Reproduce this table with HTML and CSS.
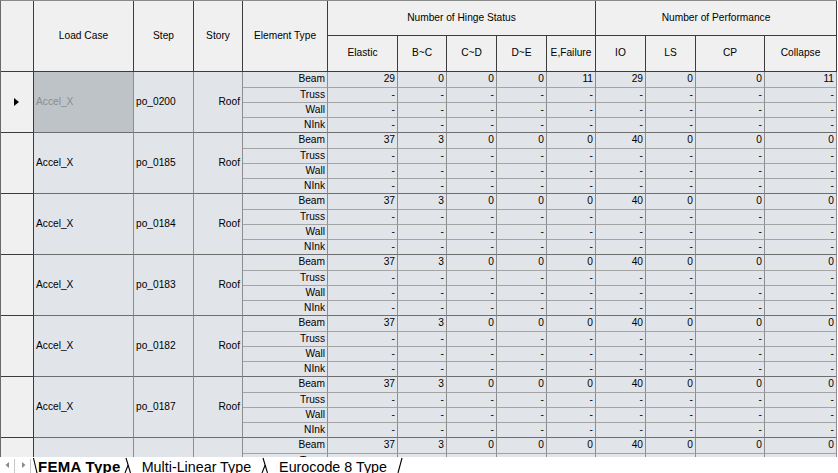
FILE: index.html
```html
<!DOCTYPE html>
<html>
<head>
<meta charset="utf-8">
<link rel="stylesheet" href="styles.css">
</head>
<body>
<div class="sheet">
  <div class="grid">
    <div class="c h hr"></div>
    <div class="c h hr">Load Case</div>
    <div class="c h hr">Step</div>
    <div class="c h hr">Story</div>
    <div class="c h hr">Element Type</div>
    <div class="c h g5">Number of Hinge Status</div>
    <div class="c h g4">Number of Performance</div>
    <div class="c h">Elastic</div>
    <div class="c h">B~C</div>
    <div class="c h">C~D</div>
    <div class="c h">D~E</div>
    <div class="c h">E,Failure</div>
    <div class="c h">IO</div>
    <div class="c h">LS</div>
    <div class="c h">CP</div>
    <div class="c h">Collapse</div>

    <!-- group 1 -->
    <div class="c rh"><span class="arrow"></span></div>
    <div class="c gp left sel">Accel_X</div>
    <div class="c gp left">po_0200</div>
    <div class="c gp">Roof</div>
    <div class="c">Beam</div><div class="c">29</div><div class="c">0</div><div class="c">0</div><div class="c">0</div><div class="c">11</div><div class="c">29</div><div class="c">0</div><div class="c">0</div><div class="c">11</div>
    <div class="c">Truss</div><div class="c">-</div><div class="c">-</div><div class="c">-</div><div class="c">-</div><div class="c">-</div><div class="c">-</div><div class="c">-</div><div class="c">-</div><div class="c">-</div>
    <div class="c">Wall</div><div class="c">-</div><div class="c">-</div><div class="c">-</div><div class="c">-</div><div class="c">-</div><div class="c">-</div><div class="c">-</div><div class="c">-</div><div class="c">-</div>
    <div class="c l">NInk</div><div class="c l">-</div><div class="c l">-</div><div class="c l">-</div><div class="c l">-</div><div class="c l">-</div><div class="c l">-</div><div class="c l">-</div><div class="c l">-</div><div class="c l">-</div>

    <!-- group 2 -->
    <div class="c rh"></div>
    <div class="c gp left">Accel_X</div>
    <div class="c gp left">po_0185</div>
    <div class="c gp">Roof</div>
    <div class="c">Beam</div><div class="c">37</div><div class="c">3</div><div class="c">0</div><div class="c">0</div><div class="c">0</div><div class="c">40</div><div class="c">0</div><div class="c">0</div><div class="c">0</div>
    <div class="c">Truss</div><div class="c">-</div><div class="c">-</div><div class="c">-</div><div class="c">-</div><div class="c">-</div><div class="c">-</div><div class="c">-</div><div class="c">-</div><div class="c">-</div>
    <div class="c">Wall</div><div class="c">-</div><div class="c">-</div><div class="c">-</div><div class="c">-</div><div class="c">-</div><div class="c">-</div><div class="c">-</div><div class="c">-</div><div class="c">-</div>
    <div class="c l">NInk</div><div class="c l">-</div><div class="c l">-</div><div class="c l">-</div><div class="c l">-</div><div class="c l">-</div><div class="c l">-</div><div class="c l">-</div><div class="c l">-</div><div class="c l">-</div>

    <!-- group 3 -->
    <div class="c rh"></div>
    <div class="c gp left">Accel_X</div>
    <div class="c gp left">po_0184</div>
    <div class="c gp">Roof</div>
    <div class="c">Beam</div><div class="c">37</div><div class="c">3</div><div class="c">0</div><div class="c">0</div><div class="c">0</div><div class="c">40</div><div class="c">0</div><div class="c">0</div><div class="c">0</div>
    <div class="c">Truss</div><div class="c">-</div><div class="c">-</div><div class="c">-</div><div class="c">-</div><div class="c">-</div><div class="c">-</div><div class="c">-</div><div class="c">-</div><div class="c">-</div>
    <div class="c">Wall</div><div class="c">-</div><div class="c">-</div><div class="c">-</div><div class="c">-</div><div class="c">-</div><div class="c">-</div><div class="c">-</div><div class="c">-</div><div class="c">-</div>
    <div class="c l">NInk</div><div class="c l">-</div><div class="c l">-</div><div class="c l">-</div><div class="c l">-</div><div class="c l">-</div><div class="c l">-</div><div class="c l">-</div><div class="c l">-</div><div class="c l">-</div>

    <!-- group 4 -->
    <div class="c rh"></div>
    <div class="c gp left">Accel_X</div>
    <div class="c gp left">po_0183</div>
    <div class="c gp">Roof</div>
    <div class="c">Beam</div><div class="c">37</div><div class="c">3</div><div class="c">0</div><div class="c">0</div><div class="c">0</div><div class="c">40</div><div class="c">0</div><div class="c">0</div><div class="c">0</div>
    <div class="c">Truss</div><div class="c">-</div><div class="c">-</div><div class="c">-</div><div class="c">-</div><div class="c">-</div><div class="c">-</div><div class="c">-</div><div class="c">-</div><div class="c">-</div>
    <div class="c">Wall</div><div class="c">-</div><div class="c">-</div><div class="c">-</div><div class="c">-</div><div class="c">-</div><div class="c">-</div><div class="c">-</div><div class="c">-</div><div class="c">-</div>
    <div class="c l">NInk</div><div class="c l">-</div><div class="c l">-</div><div class="c l">-</div><div class="c l">-</div><div class="c l">-</div><div class="c l">-</div><div class="c l">-</div><div class="c l">-</div><div class="c l">-</div>

    <!-- group 5 -->
    <div class="c rh"></div>
    <div class="c gp left">Accel_X</div>
    <div class="c gp left">po_0182</div>
    <div class="c gp">Roof</div>
    <div class="c">Beam</div><div class="c">37</div><div class="c">3</div><div class="c">0</div><div class="c">0</div><div class="c">0</div><div class="c">40</div><div class="c">0</div><div class="c">0</div><div class="c">0</div>
    <div class="c">Truss</div><div class="c">-</div><div class="c">-</div><div class="c">-</div><div class="c">-</div><div class="c">-</div><div class="c">-</div><div class="c">-</div><div class="c">-</div><div class="c">-</div>
    <div class="c">Wall</div><div class="c">-</div><div class="c">-</div><div class="c">-</div><div class="c">-</div><div class="c">-</div><div class="c">-</div><div class="c">-</div><div class="c">-</div><div class="c">-</div>
    <div class="c l">NInk</div><div class="c l">-</div><div class="c l">-</div><div class="c l">-</div><div class="c l">-</div><div class="c l">-</div><div class="c l">-</div><div class="c l">-</div><div class="c l">-</div><div class="c l">-</div>

    <!-- group 6 -->
    <div class="c rh"></div>
    <div class="c gp left">Accel_X</div>
    <div class="c gp left">po_0187</div>
    <div class="c gp">Roof</div>
    <div class="c">Beam</div><div class="c">37</div><div class="c">3</div><div class="c">0</div><div class="c">0</div><div class="c">0</div><div class="c">40</div><div class="c">0</div><div class="c">0</div><div class="c">0</div>
    <div class="c">Truss</div><div class="c">-</div><div class="c">-</div><div class="c">-</div><div class="c">-</div><div class="c">-</div><div class="c">-</div><div class="c">-</div><div class="c">-</div><div class="c">-</div>
    <div class="c">Wall</div><div class="c">-</div><div class="c">-</div><div class="c">-</div><div class="c">-</div><div class="c">-</div><div class="c">-</div><div class="c">-</div><div class="c">-</div><div class="c">-</div>
    <div class="c l">NInk</div><div class="c l">-</div><div class="c l">-</div><div class="c l">-</div><div class="c l">-</div><div class="c l">-</div><div class="c l">-</div><div class="c l">-</div><div class="c l">-</div><div class="c l">-</div>

    <!-- group 7 -->
    <div class="c rh"></div>
    <div class="c gp left">Accel_X</div>
    <div class="c gp left">po_0186</div>
    <div class="c gp">Roof</div>
    <div class="c">Beam</div><div class="c">37</div><div class="c">3</div><div class="c">0</div><div class="c">0</div><div class="c">0</div><div class="c">40</div><div class="c">0</div><div class="c">0</div><div class="c">0</div>
    <div class="c">Truss</div><div class="c">-</div><div class="c">-</div><div class="c">-</div><div class="c">-</div><div class="c">-</div><div class="c">-</div><div class="c">-</div><div class="c">-</div><div class="c">-</div>
    <div class="c">Wall</div><div class="c">-</div><div class="c">-</div><div class="c">-</div><div class="c">-</div><div class="c">-</div><div class="c">-</div><div class="c">-</div><div class="c">-</div><div class="c">-</div>
    <div class="c l">NInk</div><div class="c l">-</div><div class="c l">-</div><div class="c l">-</div><div class="c l">-</div><div class="c l">-</div><div class="c l">-</div><div class="c l">-</div><div class="c l">-</div><div class="c l">-</div>
  </div>
</div>
<div class="tabs">
  <svg class="nav" width="33" height="16" viewBox="0 0 33 16">
    <polygon points="9,5 9,11 5.5,8" fill="#8a8a8a"/>
    <line x1="14.5" y1="2" x2="14.5" y2="16" stroke="#c8c8c8"/>
    <polygon points="22,5 22,11 25.5,8" fill="#8a8a8a"/>
    <line x1="30.5" y1="2" x2="30.5" y2="16" stroke="#c8c8c8"/>
  </svg>
  <svg class="edge" width="5" height="16" viewBox="0 0 5 16"><line x1="0.5" y1="1" x2="4" y2="16" stroke="#000" stroke-width="1.1"/></svg>
  <span class="tab active">FEMA Type</span>
  <svg class="lam" width="8" height="16" viewBox="0 0 8 16"><line x1="2" y1="1" x2="6.5" y2="16" stroke="#000" stroke-width="1.1"/><line x1="4.2" y1="8" x2="1" y2="16" stroke="#000" stroke-width="1.1"/></svg>
  <span class="tab">Multi-Linear Type</span>
  <svg class="lam" width="8" height="16" viewBox="0 0 8 16"><line x1="2" y1="1" x2="6.5" y2="16" stroke="#000" stroke-width="1.1"/><line x1="4.2" y1="8" x2="1" y2="16" stroke="#000" stroke-width="1.1"/></svg>
  <span class="tab">Eurocode 8 Type</span>
  <svg class="edge end" width="6" height="16" viewBox="0 0 6 16"><line x1="5" y1="1" x2="1" y2="16" stroke="#000" stroke-width="1.1"/></svg>
</div>
</body>
</html>
```

FILE: styles.css
```css
html, body {
  margin: 0;
  padding: 0;
  background: #ffffff;
}

body {
  font-family: "Liberation Sans", Arial, sans-serif;
  font-size: 10.2px;
  color: #000;
  width: 838px;
  height: 473px;
  overflow: hidden;
}

.sheet {
  height: 457px;
  overflow: hidden;
}

.grid {
  display: grid;
  grid-template-columns: 33px 100px 60px 49px 85px 70px 49px 50px 50px 49px 50px 50px 69px 72px;
  grid-template-rows: 35px 36px repeat(7, 16px 15px 15px 15px);
  width: 837px;
  box-sizing: border-box;
  border-left: 1px solid #6a6a6a;
  border-top: 1px solid #8a8a8a;
}

.c {
  box-sizing: border-box;
  display: flex;
  align-items: center;
  justify-content: flex-end;
  padding: 0 2px 0 2px;
  background: #e1e4e9;
  border-right: 1px solid #8e8e8e;
  border-bottom: 1px solid #a4a4a4;
  white-space: nowrap;
  overflow: hidden;
  line-height: 1;
}

.c.l {
  border-bottom-color: #6e6e6e;
}

.h {
  background: #f0f0f0;
  justify-content: center;
  border-right-color: #3c3c3c;
  border-bottom-color: #3c3c3c;
}

.hr {
  grid-row: span 2;
}

.g5 {
  grid-column: span 5;
}

.g4 {
  grid-column: span 4;
}

.rh {
  grid-row: span 4;
  background: #f0f0f0;
  justify-content: center;
  border-right-color: #3c3c3c;
  border-bottom-color: #3c3c3c;
}

.gp {
  grid-row: span 4;
  border-bottom-color: #6e6e6e;
}

.left {
  justify-content: flex-start;
}

.sel {
  background: #bec3c8;
  color: #8c8c8c;
}

.arrow {
  width: 0;
  height: 0;
  border-top: 4px solid transparent;
  border-bottom: 4px solid transparent;
  border-left: 5px solid #000;
  margin-left: -2px;
}

.tabs {
  height: 16px;
  display: flex;
  align-items: flex-start;
  overflow: hidden;
  font-size: 14.3px;
  line-height: 20px;
  background: #ffffff;
}

.nav {
  flex: none;
}

.edge, .lam {
  flex: none;
}

.tab {
  flex: none;
  white-space: nowrap;
}

.active {
  font-weight: bold;
  font-size: 15px;
  letter-spacing: 0.3px;
  margin-left: 0;
  margin-right: 3px;
}

.lam {
  margin-right: 10px;
}

.tab + .lam {
  margin-left: 10px;
}

.active + .lam {
  margin-left: 0;
}

.end {
  margin-left: 10px;
}
```
